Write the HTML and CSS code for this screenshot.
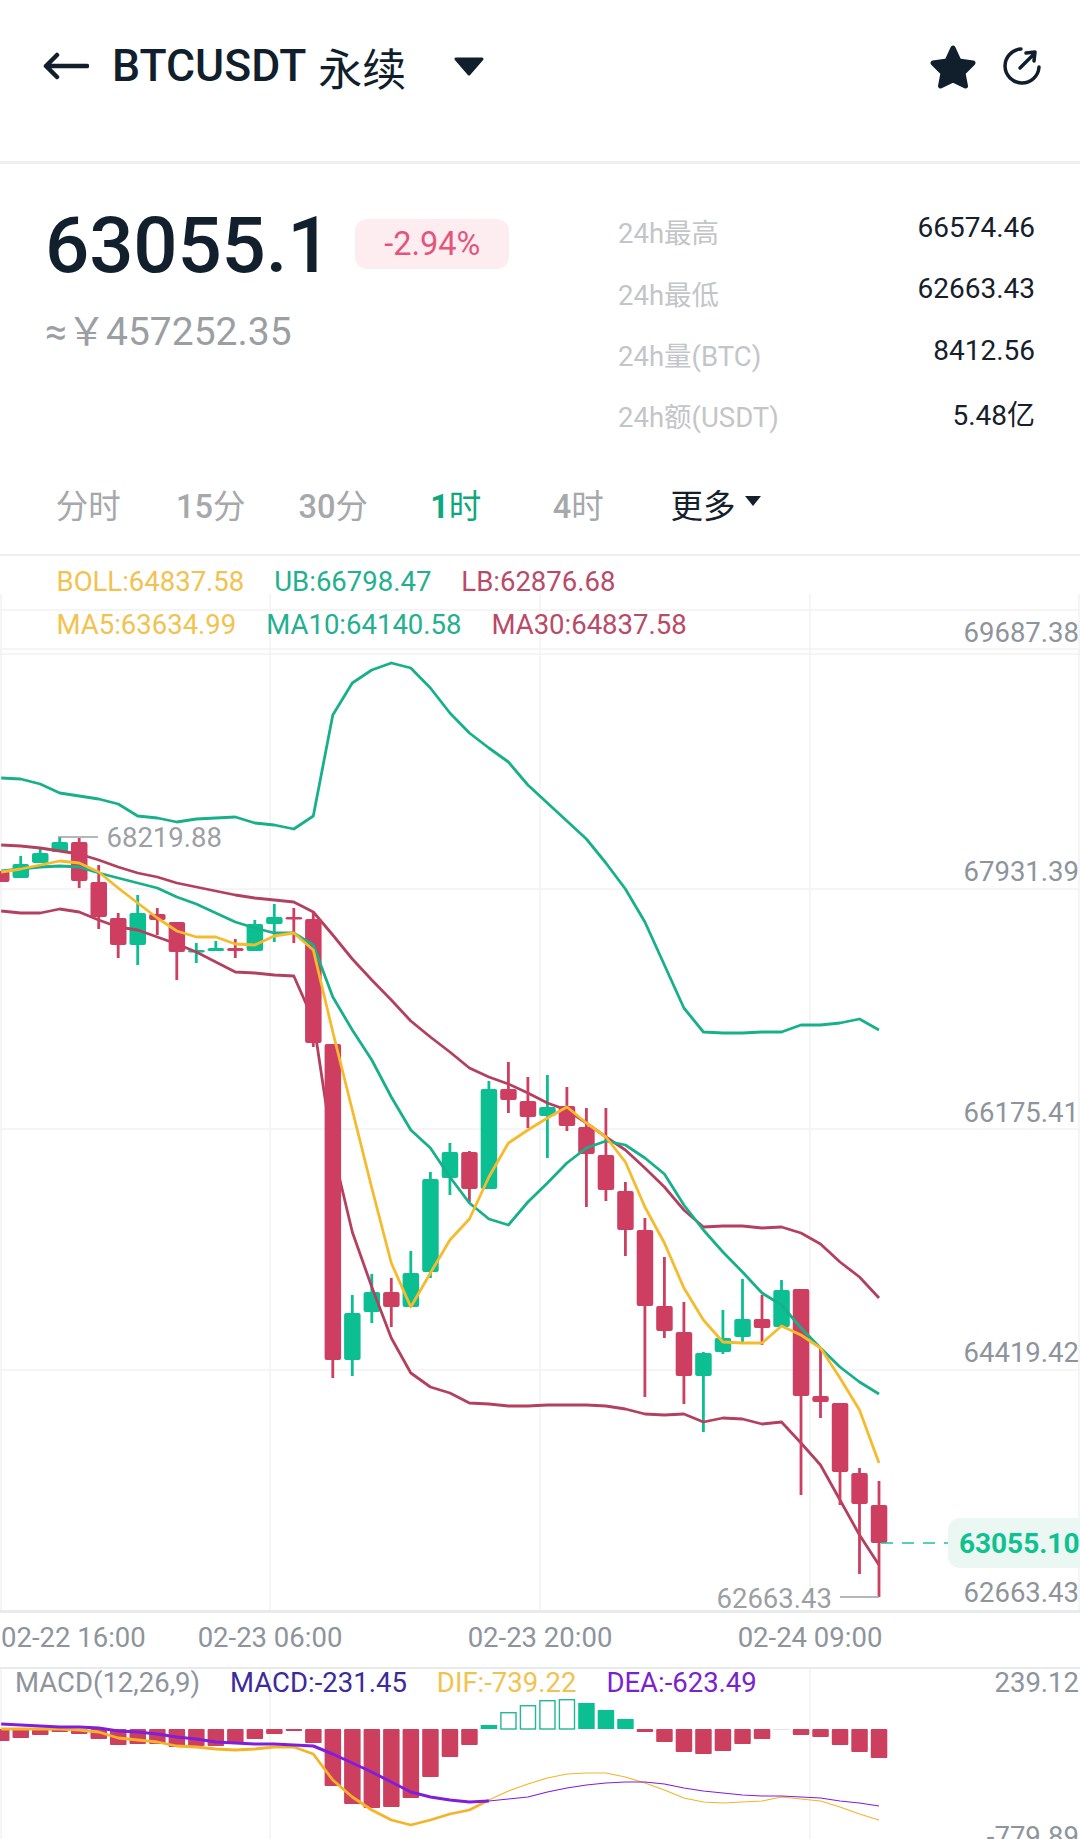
FILE: index.html
```html
<!DOCTYPE html>
<html lang="zh-CN">
<head>
<meta charset="utf-8">
<title>BTCUSDT 永续</title>
<link rel="stylesheet" href="styles.css">
</head>
<body>
<div class="page">
  <header class="topbar">
    <svg class="back" viewBox="0 0 46 28"><path d="M44 14H3M14 3 3 14l11 11"/></svg>
    <h1 class="title">BTCUSDT <span class="title-cn">永续</span></h1>
    <svg class="caret" viewBox="0 0 32 20"><path d="M3 2h26L16 17z"/></svg>
    <div class="top-actions">
      <svg class="star" viewBox="0 0 48 46"><path d="M24 4l6 13 14 2-10 10 2.500 13L24 36l-12.500 6L14 29 4 19l14-2z"/></svg>
      <svg class="share" viewBox="0 0 40 40"><path d="M19 3A17 17 0 1 0 37 21"/><path d="M18 22 31 9M24 7l9-1-1 9"/></svg>
    </div>
  </header>

  <section class="summary">
    <div class="price-block">
      <div class="price-row">
        <div class="price">63055.1</div>
        <div class="change">-2.94%</div>
      </div>
      <div class="cny">≈￥457252.35</div>
    </div>
    <dl class="stats">
      <div class="stat"><dt>24h最高</dt><dd>66574.46</dd></div>
      <div class="stat"><dt>24h最低</dt><dd>62663.43</dd></div>
      <div class="stat"><dt>24h量(BTC)</dt><dd>8412.56</dd></div>
      <div class="stat"><dt>24h额(USDT)</dt><dd>5.48亿</dd></div>
    </dl>
  </section>

  <nav class="tabs">
    <span class="tab">分时</span>
    <span class="tab"><b>15</b>分</span>
    <span class="tab"><b>30</b>分</span>
    <span class="tab active"><b>1</b>时</span>
    <span class="tab"><b>4</b>时</span>
    <span class="tab more">更多<svg class="more-caret" viewBox="0 0 18 12"><path d="M1 1h16L9 11z"/></svg></span>
  </nav>

  <section class="main-chart">
    <div class="legend">
      <div class="legend-row"><span class="c-yellow">BOLL:64837.58</span><span class="c-teal">UB:66798.47</span><span class="c-rose">LB:62876.68</span></div>
      <div class="legend-row"><span class="c-yellow">MA5:63634.99</span><span class="c-teal">MA10:64140.58</span><span class="c-rose">MA30:64837.58</span></div>
    </div>
    <svg class="chart-svg" viewBox="0 556 1080 1111">
      <g class="grid">
        <path d="M0 610H1080M0 649H1080M0 654H1080M0 889H1080M0 1129H1080M0 1370H1080"/>
        <path d="M1 594V1611M270 594V1611M540 594V1611M810 594V1611M1079 594V1611"/>
      </g>
      <path class="axis-line" d="M0 1611.500H1080"/>

      <path class="wick-g" d="M20.700 856V878M40.200 849V863M59.700 837V852M137.700 895V965M196.300 943V963M215.800 941V951M254.800 920V951M274.300 904V942M352.300 1295V1376M371.800 1274V1323M410.800 1251V1307M430.400 1172V1278M449.900 1143V1195M488.900 1081V1189M547.400 1075V1158M703.400 1352V1432M722.900 1310V1354M742.500 1279V1342M781.500 1280V1327"/>
      <g class="body-g">
        <rect x="12.500" y="864" height="14"/><rect x="32" y="853" height="10"/><rect x="51.500" y="842" height="10"/><rect x="129.500" y="913" height="32"/><rect x="188.100" y="950" height="2.500"/><rect x="207.600" y="948" height="3"/><rect x="246.600" y="924" height="27"/><rect x="266.100" y="917" height="7"/><rect x="344.100" y="1313" height="47"/><rect x="363.600" y="1292" height="20"/><rect x="402.600" y="1273" height="34"/><rect x="422.200" y="1179" height="93"/><rect x="441.700" y="1152" height="26"/><rect x="480.700" y="1089" height="100"/><rect x="539.200" y="1107" height="9"/><rect x="695.200" y="1353" height="23"/><rect x="714.700" y="1338" height="14"/><rect x="734.300" y="1319" height="18"/><rect x="773.300" y="1290" height="37"/>
      </g>

      <polyline class="ln-rose" points="1.200,845 20.700,846 40.200,848 59.700,851 79.200,854 98.700,860 118.200,867 137.700,873 157.300,877 176.800,883 196.300,887 215.800,891 235.300,895 254.800,898 274.300,900 293.800,902 313.300,912 332.800,935 352.300,959 371.800,980 391.300,1000 410.800,1021 430.400,1037 449.900,1052 469.400,1068 488.900,1077 508.400,1084 527.900,1093 547.400,1103 566.900,1110 586.400,1123 605.900,1137 625.400,1150 644.900,1168 664.400,1187 683.900,1210 703.400,1227 722.900,1226 742.500,1226 762,1228 781.500,1227 801,1233 820.500,1244 840,1262 859.500,1277 879,1298"/>
      <polyline class="ln-rose" points="1.200,911 20.700,913 40.200,913 59.700,909 79.200,912 98.700,920 118.200,927 137.700,930 157.300,937 176.800,944 196.300,952 215.800,962 235.300,972 254.800,973 274.300,975 293.800,976 313.300,1020 332.800,1150 352.300,1232 371.800,1287 391.300,1338 410.800,1373 430.400,1387 449.900,1393 469.400,1403 488.900,1404 508.400,1406 527.900,1406 547.400,1405 566.900,1405 586.400,1405 605.900,1406 625.400,1409 644.900,1414 664.400,1415 683.900,1414 703.400,1422 722.900,1418 742.500,1419 762,1424 781.500,1422 801,1443 820.500,1465 840,1500 859.500,1535 879,1565"/>

      <path class="wick-r" d="M1.200 871V882M79.200 838V888M98.700 865V929M118.200 913V958M157.300 908V935M176.800 922V980M235.300 939V958M293.800 908V943M313.300 913V1047M332.800 1044V1378M391.300 1278V1327M469.400 1151V1202M508.400 1062V1113M527.900 1077V1128M566.900 1087V1131M586.400 1108V1207M605.900 1108V1201M625.400 1182V1256M644.900 1218V1397M664.400 1257V1338M683.900 1302V1404M762 1295V1345M801 1289V1495M820.500 1348V1418M840 1403V1505M859.500 1468V1574M879 1481V1597"/>
      <g class="body-r">
        <rect x="-7" y="871" height="11"/><rect x="71" y="842" height="39"/><rect x="90.500" y="882" height="35"/><rect x="110" y="918" height="27"/><rect x="149.100" y="914" height="6"/><rect x="168.600" y="922" height="30"/><rect x="227.100" y="948" height="3"/><rect x="285.600" y="917" height="2.500"/><rect x="305.100" y="919" height="124"/><rect x="324.600" y="1044" height="316"/><rect x="383.100" y="1292" height="15"/><rect x="461.200" y="1152" height="37"/><rect x="500.200" y="1089" height="11"/><rect x="519.700" y="1101" height="16"/><rect x="558.700" y="1106" height="20"/><rect x="578.200" y="1127" height="27"/><rect x="597.700" y="1155" height="35"/><rect x="617.200" y="1191" height="39"/><rect x="636.700" y="1230" height="76"/><rect x="656.200" y="1306" height="25"/><rect x="675.700" y="1332" height="44"/><rect x="753.800" y="1319" height="9"/><rect x="792.800" y="1289" height="107"/><rect x="812.300" y="1396" height="6"/><rect x="831.800" y="1403" height="69"/><rect x="851.300" y="1473" height="31"/><rect x="870.800" y="1505" height="38"/>
      </g>

      <polyline class="ln-teal" points="1.200,778 20.700,779 40.200,784 59.700,793 79.200,796 98.700,799 118.200,804 137.700,816 157.300,818 176.800,822 196.300,819 215.800,818 235.300,817 254.800,823 274.300,825 293.800,829 313.300,816 332.800,715 352.300,683 371.800,670 391.300,663 410.800,668 430.400,688 449.900,713 469.400,733 488.900,748 508.400,762 527.900,785 547.400,803 566.900,821 586.400,839 605.900,863 625.400,889 644.900,922 664.400,965 683.900,1008 703.400,1032 722.900,1033 742.500,1033 762,1032 781.500,1032 801,1025 820.500,1025 840,1023 859.500,1019 879,1030"/>
      <polyline class="ln-teal" points="1.200,871 20.700,869 40.200,867 59.700,866 79.200,867 98.700,873 118.200,878 137.700,883 157.300,888 176.800,897 196.300,904 215.800,913 235.300,922 254.800,928 274.300,933 293.800,933 313.300,945 332.800,997 352.300,1030 371.800,1060 391.300,1097 410.800,1130 430.400,1148 449.900,1177 469.400,1203 488.900,1219 508.400,1225 527.900,1202 547.400,1183 566.900,1163 586.400,1148 605.900,1141 625.400,1145 644.900,1158 664.400,1174 683.900,1205 703.400,1230 722.900,1252 742.500,1272 762,1293 781.500,1305 801,1328 820.500,1348 840,1367 859.500,1382 879,1394"/>
      <polyline class="ln-yellow" points="1.200,872 20.700,869 40.200,865 59.700,861 79.200,863 98.700,872 118.200,888 137.700,903 157.300,918 176.800,931 196.300,937 215.800,937 235.300,944 254.800,945 274.300,936 293.800,933 313.300,950 332.800,1032 352.300,1110 371.800,1188 391.300,1263 410.800,1307 430.400,1273 449.900,1240 469.400,1219 488.900,1177 508.400,1143 527.900,1130 547.400,1118 566.900,1107 586.400,1123 605.900,1137 625.400,1162 644.900,1207 664.400,1243 683.900,1288 703.400,1320 722.900,1342 742.500,1343 762,1343 781.500,1326 801,1335 820.500,1348 840,1378 859.500,1410 879,1463"/>

      <path class="hl-line" d="M58 837H98M840 1597H879"/>
      <text class="hl-text" x="106.500" y="847">68219.88</text>
      <text class="hl-text" x="716.500" y="1608">62663.43</text>

      <path class="dash" d="M881 1543H948"/>
      <path class="tag" d="M1080 1518H960a12 12 0 0 0-12 12v26a12 12 0 0 0 12 12h120z"/>
      <text class="tag-text" x="1079.500" y="1553">63055.10</text>

      <text class="y-label" x="1079" y="642">69687.38</text>
      <text class="y-label" x="1079" y="881">67931.39</text>
      <text class="y-label" x="1079" y="1122">66175.41</text>
      <text class="y-label" x="1079" y="1362">64419.42</text>
      <text class="y-label" x="1079" y="1602">62663.43</text>

      <text class="x-label" x="1" y="1647">02-22 16:00</text>
      <text class="x-label mid" x="270" y="1647">02-23 06:00</text>
      <text class="x-label mid" x="540" y="1647">02-23 20:00</text>
      <text class="x-label mid" x="810" y="1647">02-24 09:00</text>
    </svg>
  </section>

  <section class="macd">
    <div class="legend-row macd-legend"><span class="c-grey">MACD(12,26,9)</span><span class="c-indigo">MACD:-231.45</span><span class="c-yellow">DIF:-739.22</span><span class="c-violet">DEA:-623.49</span></div>
    <svg class="macd-svg" viewBox="0 1669 1080 170">
      <path class="grid-v" d="M270 1669V1839M810 1669V1839M1 1669V1839"/>
      <g class="bar-r">
        <rect x="-7" y="1729" height="12"/><rect x="12.500" y="1729" height="9"/><rect x="32" y="1729" height="6"/><rect x="51.500" y="1729" height="3"/><rect x="71" y="1729" height="5"/><rect x="90.500" y="1729" height="10"/><rect x="110" y="1729" height="16"/><rect x="129.500" y="1729" height="15"/><rect x="149.100" y="1729" height="15"/><rect x="168.600" y="1729" height="18"/><rect x="188.100" y="1729" height="17"/><rect x="207.600" y="1729" height="17"/><rect x="227.100" y="1729" height="15"/><rect x="246.600" y="1729" height="10"/><rect x="266.100" y="1729" height="5"/><rect x="285.600" y="1729" height="2"/><rect x="305.100" y="1729" height="14"/><rect x="324.600" y="1729" height="57"/><rect x="344.100" y="1729" height="75"/><rect x="363.600" y="1729" height="79"/><rect x="383.100" y="1729" height="78"/><rect x="402.600" y="1729" height="69"/><rect x="422.200" y="1729" height="48"/><rect x="441.700" y="1729" height="28"/><rect x="461.200" y="1729" height="16"/><rect x="636.700" y="1729" height="3"/><rect x="656.200" y="1729" height="13"/><rect x="675.700" y="1729" height="23"/><rect x="695.200" y="1729" height="25"/><rect x="714.700" y="1729" height="22"/><rect x="734.300" y="1729" height="15"/><rect x="753.800" y="1729" height="10"/><rect x="792.800" y="1729" height="6"/><rect x="812.300" y="1729" height="8"/><rect x="831.800" y="1729" height="16"/><rect x="851.300" y="1729" height="23"/><rect x="870.800" y="1729" height="29"/>
      </g>
      <g class="bar-g">
        <rect x="480.700" y="1725" height="4"/><rect x="578.200" y="1703" height="26"/><rect x="597.700" y="1710" height="19"/><rect x="617.200" y="1719" height="10"/>
      </g>
      <g class="bar-h">
        <rect x="500.900" y="1712.700" height="16.300"/><rect x="520.400" y="1705.700" height="23.300"/><rect x="539.900" y="1700.700" height="28.300"/><rect x="559.400" y="1699.700" height="29.300"/>
      </g>
      <path class="bar-faint" d="M773.300 1729.500H789.800"/>

      <polyline class="ln-dif" points="1.200,1729 20.700,1729 40.200,1729 59.700,1729 79.200,1730 98.700,1732 118.200,1738 137.700,1740 157.300,1742 176.800,1746 196.300,1747 215.800,1749 235.300,1750 254.800,1749 274.300,1747 293.800,1747 313.300,1754 332.800,1780 352.300,1797 371.800,1810 391.300,1820 410.800,1825 430.400,1820 449.900,1814 469.400,1810 488.900,1800"/>
      <polyline class="ln-dif thin" points="488.900,1800 508.400,1791 527.900,1784 547.400,1778 566.900,1774 586.400,1773 605.900,1773 625.400,1777 644.900,1783 664.400,1790 683.900,1798 703.400,1802 722.900,1803 742.500,1802 762,1801 781.500,1797 801,1799 820.500,1801 840,1807 859.500,1814 879,1820"/>
      <polyline class="ln-dea" points="1.200,1724 20.700,1725 40.200,1726 59.700,1727 79.200,1727 98.700,1728 118.200,1731 137.700,1732 157.300,1734 176.800,1737 196.300,1739 215.800,1742 235.300,1743 254.800,1744 274.300,1744 293.800,1745 313.300,1746 332.800,1754 352.300,1763 371.800,1772 391.300,1782 410.800,1792 430.400,1797 449.900,1800 469.400,1802 488.900,1801"/>
      <polyline class="ln-dea thin" points="488.900,1801 508.400,1799 527.900,1797 547.400,1792 566.900,1788 586.400,1785 605.900,1783 625.400,1782 644.900,1782 664.400,1784 683.900,1788 703.400,1791 722.900,1793 742.500,1795 762,1796 781.500,1796 801,1797 820.500,1798 840,1801 859.500,1803 879,1806"/>

      <text class="y-label" x="1079" y="1692">239.12</text>
      <text class="y-label" x="1079" y="1846">-779.89</text>
    </svg>
  </section>
</div>
</body>
</html>
```
FILE: styles.css
```css
* { box-sizing: border-box; }
html, body { margin: 0; padding: 0; background: #fff; }
body { font-family: Roboto, "Noto Sans CJK SC", sans-serif; color: #111e2b; }
.page { width: 1080px; height: 1839px; overflow: hidden; display: flex; flex-direction: column; }

/* header */
.topbar { height: 164px; flex: none; display: flex; align-items: flex-start; padding: 0 38px 0 43px; border-bottom: 3px solid #eeeff0; }
.back { width: 46px; height: 28px; margin-top: 52px; flex: none; }
.back path { fill: none; stroke: #111e2b; stroke-width: 4.500; stroke-linecap: round; stroke-linejoin: round; }
.title { margin: 38px 0 0 23px; font-size: 44.500px; line-height: 56px; font-weight: 500; white-space: nowrap; }
.title-cn { font-weight: 400; font-size: 44px; margin-left: 2px; vertical-align: -5px; }
.caret { width: 32px; height: 20px; margin: 57px 0 0 47px; flex: none; }
.caret path { fill: #111e2b; stroke: #111e2b; stroke-width: 3; stroke-linejoin: round; }
.top-actions { margin-left: auto; display: flex; align-items: flex-start; gap: 25px; padding-top: 44px; }
.star { width: 48px; height: 46px; }
.star path { fill: #111e2b; stroke: #111e2b; stroke-width: 5; stroke-linejoin: round; }
.share { width: 40px; height: 40px; margin-top: 2px; }
.share path { fill: none; stroke: #111e2b; stroke-width: 3.500; stroke-linecap: round; stroke-linejoin: round; }

/* summary */
.summary { height: 293px; flex: none; display: flex; padding: 0 45px; }
.price-block { width: 573px; flex: none; padding-top: 38px; }
.price-row { display: flex; align-items: center; gap: 24px; height: 88px; }
.price { font-size: 78px; line-height: 88px; font-weight: 500; color: #12202e; letter-spacing: -0.2px; }
.change { width: 154px; height: 50px; margin-bottom: 4px; border-radius: 12px; background: #fdedf1; color: #e2567c; font-size: 32.500px; line-height: 50px; text-align: center; }
.cny { margin-top: 18px; font-size: 39px; line-height: 48px; color: #9b9fa4; white-space: nowrap; }
.stats { flex: 1; margin: 32.500px 0 0; display: flex; flex-direction: column; }
.stat { height: 61.500px; display: flex; justify-content: space-between; align-items: center; }
.stat dt { color: #c3c5c8; font-size: 27.500px; padding-top: 8px; }
.stat dd { margin: 0; color: #16202b; font-size: 28px; }
.stat:last-child dt { padding-top: 6px; }
.stat:last-child dd { padding-top: 3px; }

/* tabs */
.tabs { height: 99px; flex: none; display: flex; align-items: center; padding: 0 0 5px 27px; border-bottom: 2px solid #eeeff0; }
.tab { width: 122.500px; text-align: center; font-size: 32.500px; color: #a6a8ab; white-space: nowrap; }
.tab b { font-weight: 500; }
.tab.active { color: #0fa77d; }
.tab.active b { font-weight: 700; }
.tab.more { color: #16202b; display: flex; align-items: center; padding-left: 31px; width: auto; }
.more-caret { width: 18px; height: 12px; margin-left: 8px; margin-top: -4px; }
.more-caret path { fill: #16202b; }

/* main chart */
.main-chart { position: relative; height: 1113px; flex: none; border-bottom: 2px solid #e9eaeb; }
.chart-svg { display: block; width: 1080px; height: 1111px; }
.legend { position: absolute; left: 56.500px; top: 10px; display: flex; flex-direction: column; gap: 11px; }
.legend-row { display: flex; gap: 30px; font-size: 27.500px; line-height: 32px; white-space: nowrap; }
.c-yellow { color: #f2c24f; }
.c-teal { color: #22b08f; }
.c-rose { color: #b94a68; }
.c-grey { color: #8e949c; }
.c-indigo { color: #3d2a9c; }
.c-violet { color: #7a22d0; }

.grid path, .grid-v { fill: none; stroke: #f2f2f3; stroke-width: 1.500; }
.axis-line { stroke: #e9eaeb; stroke-width: 3; fill: none; }
.wick-g, .wick-r { fill: none; stroke-width: 2.800; }
.wick-g { stroke: #0cbf93; }
.wick-r { stroke: #ce3e60; }
.body-g rect, .body-r rect { width: 16.500px; rx: 2px; }
.body-g rect { fill: #0cbf93; }
.body-r rect { fill: #ce3e60; }
polyline { fill: none; stroke-linejoin: round; }
.ln-rose { stroke: #b4405f; stroke-width: 2.800; }
.ln-teal { stroke: #18b08a; stroke-width: 2.800; }
.ln-yellow { stroke: #f5bb2d; stroke-width: 2.800; }

.hl-line { fill: none; stroke: #9c9fa3; stroke-width: 1.500; }
.hl-text { font-family: Roboto, sans-serif; font-size: 27.500px; fill: #9c9fa3; }
.dash { fill: none; stroke: #1fc196; stroke-width: 1.500; stroke-dasharray: 12 9; }
.tag { fill: #ebf7f2; }
.tag-text { font-family: Roboto, sans-serif; font-size: 28px; font-weight: 700; fill: #0fc18f; text-anchor: end; }
.y-label { font-family: Roboto, sans-serif; font-size: 27.500px; fill: #8e949c; text-anchor: end; }
.x-label { font-family: Roboto, sans-serif; font-size: 27.500px; fill: #8e949c; }
.x-label.mid { text-anchor: middle; }

/* macd */
.macd { position: relative; flex: 1; min-height: 0; }
.macd-svg { display: block; width: 1080px; height: 170px; }
.macd-legend { position: absolute; left: 15px; top: -2px; }
.bar-r rect, .bar-g rect, .bar-h rect { width: 16.500px; }
.bar-r rect { fill: #cd3f5f; rx: 1px; }
.bar-g rect { fill: #0cbf93; }
.bar-h rect { width: 15.100px; fill: #fff; stroke: #22b894; stroke-width: 1.400; }
.bar-faint { fill: none; stroke: #e4e4e4; stroke-width: 1; }
.ln-dif { stroke: #f5b32a; stroke-width: 2.800; }
.ln-dea { stroke: #7f1fdc; stroke-width: 3; }
.thin { stroke-width: 1.200; }
```
